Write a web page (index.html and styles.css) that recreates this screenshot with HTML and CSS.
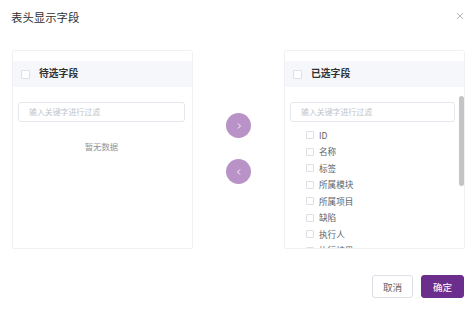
FILE: index.html
```html
<!DOCTYPE html>
<html lang="zh-CN">
	<head>
		<meta charset="utf-8">
		<meta name="viewport" content="width=device-width,initial-scale=1">
		<title>表头显示字段</title>
		<link rel="stylesheet" href="styles.css">
	</head>
	<body>
		<div class="dialog">
			<header class="dialog__header">
				<span class="dialog__title">表头显示字段</span>
				<button class="dialog__close" aria-label="关闭">
					<svg width="8" height="8" viewBox="0 0 8 8"><path d="M1 1L7 7M7 1L1 7" stroke="#a8abb2" stroke-width="0.9" fill="none"/></svg>
				</button>
			</header>

			<div class="transfer">
				<div class="panel">
					<div class="panel__head">
						<span class="check"></span>
						<span class="panel__name">待选字段</span>
					</div>
					<div class="panel__body">
						<div class="filter">输入关键字进行过滤</div>
						<p class="panel__empty">暂无数据</p>
					</div>
				</div>

				<div class="transfer__buttons">
					<button class="arrow" aria-label="右移">
						<svg width="8" height="8" viewBox="0 0 8 8"><path d="M3 1.5L5.5 4L3 6.5" stroke="#fff" stroke-width="0.9" fill="none"/></svg>
					</button>
					<button class="arrow" aria-label="左移">
						<svg width="8" height="8" viewBox="0 0 8 8"><path d="M5 1.5L2.5 4L5 6.5" stroke="#fff" stroke-width="0.9" fill="none"/></svg>
					</button>
				</div>

				<div class="panel">
					<div class="panel__head">
						<span class="check"></span>
						<span class="panel__name">已选字段</span>
					</div>
					<div class="panel__body panel__body--list">
						<div class="filter">输入关键字进行过滤</div>
						<ul class="items">
							<li><span class="check"></span>ID</li>
							<li><span class="check"></span>名称</li>
							<li><span class="check"></span>标签</li>
							<li><span class="check"></span>所属模块</li>
							<li><span class="check"></span>所属项目</li>
							<li><span class="check"></span>缺陷</li>
							<li><span class="check"></span>执行人</li>
							<li><span class="check"></span>执行结果</li>
							<li><span class="check"></span>创建时间</li>
						</ul>
						<div class="scroll-thumb"></div>
					</div>
				</div>
			</div>

			<footer class="dialog__footer">
				<button class="btn">取消</button>
				<button class="btn btn--primary">确定</button>
			</footer>
		</div>
	</body>
</html>
```

FILE: styles.css
```css
* {
	box-sizing: border-box;
}
html,
body {
	height: 100%;
}
body {
	background: #fff;
	color: #606266;
	font-family: "Noto Sans CJK SC", "Noto Sans", sans-serif;
	line-height: 1;
	margin: 0;
}
button {
	background: none;
	border: none;
	cursor: pointer;
	font-family: inherit;
	padding: 0;
}
ul {
	list-style: none;
	margin: 0;
	padding: 0;
}

.dialog {
	height: 311px;
	width: 474px;
}

/* header */
.dialog__header {
	align-items: center;
	display: flex;
	height: 38px;
	justify-content: space-between;
	padding: 0 10px 2px 11px;
}
.dialog__title {
	color: #303133;
	font-size: 11.4px;
}
.dialog__close {
	display: flex;
	margin-top: -4px;
}

/* transfer */
.transfer {
	display: flex;
	margin-top: 12px;
	padding-left: 12px;
}
.panel {
	border: 1px solid #f0f1f4;
	border-radius: 2px;
	display: flex;
	flex-direction: column;
	height: 199px;
	overflow: hidden;
	padding-top: 10px;
	width: 181px;
}
.panel__head {
	align-items: center;
	background: #f5f7fa;
	display: flex;
	flex: none;
	height: 26px;
	padding-left: 8px;
}
.panel__name {
	color: #303133;
	font-size: 9.8px;
	font-weight: 700;
	margin-left: 9px;
}
.check {
	background: #fff;
	border: 1px solid #dcdfe6;
	border-radius: 1px;
	display: inline-block;
	flex: none;
	height: 9px;
	width: 9px;
}
.panel__body {
	flex: 1;
	overflow: hidden;
	padding: 15px 7px 0 5px;
	position: relative;
}
.panel__body--list {
	padding-right: 9px;
}
.filter {
	border: 1px solid #e4e7ed;
	border-radius: 3px;
	color: #c0c4cc;
	font-size: 7.9px;
	height: 20px;
	line-height: 18px;
	padding-left: 10px;
}
.panel__empty {
	color: #909399;
	font-size: 8.4px;
	margin: 20px 0 0;
	text-align: center;
}

.items {
	padding: 5px 0 0 16px;
}
.items li {
	align-items: center;
	color: #606266;
	display: flex;
	font-size: 8.6px;
	height: 16.5px;
}
.items .check {
	height: 8px;
	margin-right: 5px;
	width: 8px;
}
.scroll-thumb {
	background: #c4c4c4;
	border-radius: 3px;
	height: 90px;
	position: absolute;
	right: 0;
	top: 9px;
	width: 5px;
}

.transfer__buttons {
	align-items: center;
	display: flex;
	flex-direction: column;
	gap: 21px;
	padding-top: 63px;
	width: 91px;
}
.arrow {
	align-items: center;
	background: #b992c8;
	border-radius: 50%;
	display: flex;
	height: 25px;
	justify-content: center;
	width: 25px;
}

/* footer */
.dialog__footer {
	display: flex;
	gap: 8px;
	justify-content: flex-end;
	margin-top: 26px;
	padding-right: 10px;
}
.btn {
	border: 1px solid #dcdfe6;
	border-radius: 3px;
	color: #606266;
	font-size: 9.6px;
	height: 23px;
	width: 41px;
}
.btn--primary {
	background: #6c2e8c;
	border-color: #6c2e8c;
	color: #fff;
	width: 43px;
}
```
